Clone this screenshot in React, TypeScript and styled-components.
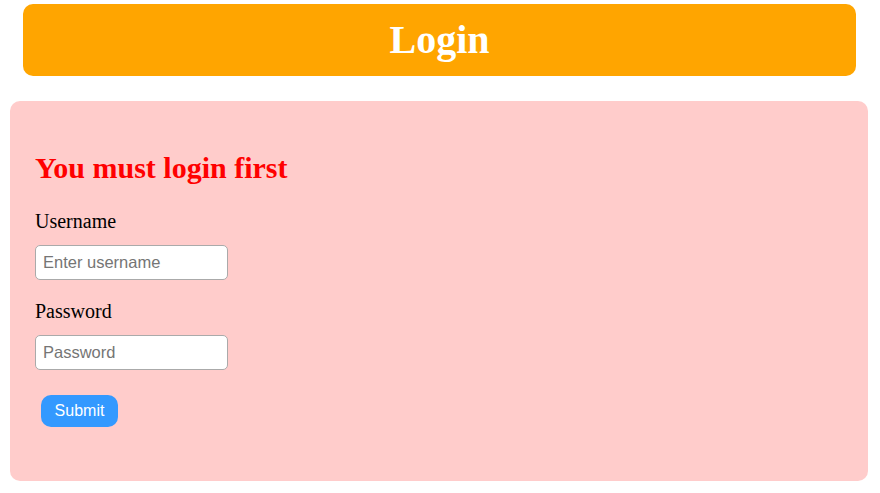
import React from "react";
import styled, { createGlobalStyle } from "styled-components";

const Global = createGlobalStyle`
  html, body { margin: 0; padding: 0; background: #ffffff; }
  body { font-family: "Liberation Serif", "Times New Roman", serif; }
  * { box-sizing: border-box; }
`;

const Page = styled.div`
  display: flex;
  flex-direction: column;
  padding: 4px 12px 12px 10px;
`;

const Header = styled.header`
  margin: 0 12px 25px 13px;
  height: 72px;
  background: #ffa500;
  border-radius: 10px;
  display: flex;
  align-items: center;
  justify-content: center;
`;

const HeaderTitle = styled.h1`
  margin: 0;
  font-family: "Liberation Serif", "Times New Roman", serif;
  font-size: 40px;
  line-height: 72px;
  font-weight: bold;
  color: #ffffff;
`;

const Card = styled.main`
  background: #ffcccb;
  border-radius: 10px;
  padding: 49px 25px 54px 25px;
  display: flex;
  flex-direction: column;
  align-items: flex-start;
`;

const Warning = styled.h2`
  margin: 0 0 23px 0;
  font-size: 30px;
  line-height: 36px;
  font-weight: bold;
  color: #ff0000;
`;

const Form = styled.form`
  display: flex;
  flex-direction: column;
  align-items: flex-start;
`;

const Label = styled.label`
  font-size: 20px;
  line-height: 24px;
  color: #000000;
  margin-bottom: 12px;
`;

const Input = styled.input<{ $gap: number }>`
  width: 193px;
  height: 35px;
  margin: 0 0 ${(p) => p.$gap}px 0;
  padding: 0 7px;
  border: 1px solid #aaaaaa;
  border-radius: 5px;
  background: #ffffff;
  font-family: "Liberation Sans", Arial, sans-serif;
  font-size: 16.5px;
  color: #000;
  outline: none;
  &::placeholder { color: #757575; }
`;

const Submit = styled.button`
  margin-left: 6px;
  width: 77px;
  height: 32px;
  border: none;
  border-radius: 10px;
  background: #3399ff;
  color: #ffffff;
  font-family: "Liberation Sans", Arial, sans-serif;
  font-size: 16px;
  cursor: pointer;
`;

export default function App() {
  return (
    <>
      <Global />
      <Page>
        <Header>
          <HeaderTitle>Login</HeaderTitle>
        </Header>
        <Card>
          <Warning>You must login first</Warning>
          <Form onSubmit={(e) => e.preventDefault()}>
            <Label htmlFor="username">Username</Label>
            <Input id="username" type="text" placeholder="Enter username" $gap={19} />
            <Label htmlFor="password">Password</Label>
            <Input id="password" type="password" placeholder="Password" $gap={25} />
            <Submit type="submit">Submit</Submit>
          </Form>
        </Card>
      </Page>
    </>
  );
}
